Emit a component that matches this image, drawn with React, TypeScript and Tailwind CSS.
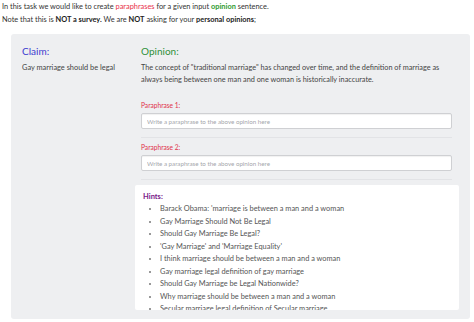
const hints = [
  "Barack Obama: 'marriage is between a man and a woman",
  'Gay Marriage Should Not Be Legal',
  'Should Gay Marriage Be Legal?',
  "'Gay Marriage' and 'Marriage Equality'",
  'I think marriage should be between a man and a woman',
  'Gay marriage legal definition of gay marriage',
  'Should Gay Marriage be Legal Nationwide?',
  'Why marriage should be between a man and a woman',
  'Secular marriage legal definition of Secular marriage',
  'Same-sex marriage in the United States',
]

function ParaphraseField({ n }: { n: number }) {
  return (
    <div className="mr-[7px]">
      <p className="text-[6.6px] leading-[9px] text-[#e0304a]">Paraphrase {n}:</p>
      <input
        className="mt-[3px] block h-[16px] w-full rounded-[2px] border border-[#cfd0d3] bg-white px-[5px] text-[6.2px] text-[#555] shadow-[inset_0_1px_1px_rgba(0,0,0,0.06)] outline-none placeholder:text-[#a4a6ab]"
        placeholder="Write a paraphrase to the above opinion here"
      />
      <div className="mt-[8px] h-px bg-[#e2e3e6]" />
    </div>
  )
}

export default function App() {
  return (
    <div className="h-[322px] w-[474px] overflow-hidden bg-white font-['Lato',sans-serif] text-[#333]">
      <div className="pl-[2px] text-[7.4px] leading-[13px]">
        <p>
          In this task we would like to create <span className="text-[#e8304a]">paraphrases</span> for a given input{' '}
          <span className="font-bold text-[#2e9a2e]">opinion</span> sentence.
        </p>
        <p>
          Note that this is <b className="text-[#222]">NOT a survey.</b> We are <b className="text-[#222]">NOT</b> asking for your{' '}
          <b className="text-[#222]">personal opinions</b>;
        </p>
      </div>

      <div className="ml-[11px] mt-[8px] flex h-[285px] w-[459px] rounded-[3px] bg-[#eeeff1] pl-[11px] pr-[11px] pt-[10px]">
        <div className="w-[119px] shrink-0">
          <h2 className="text-[10px] leading-[14px] text-[#3b3bcf]">Claim:</h2>
          <p className="mt-[4px] text-[7.4px] leading-[12px] text-[#444]">Gay marriage should be legal</p>
        </div>

        <div className="flex min-w-0 flex-1 flex-col">
          <h2 className="text-[10px] leading-[14px] text-[#2f8f3a]">Opinion:</h2>
          <p className="mt-[4px] text-[7.3px] leading-[12px] text-[#444]">
            The concept of "traditional marriage" has changed over time, and the definition of marriage as always
            being between one man and one woman is historically inaccurate.
          </p>

          <div className="mt-[15px] flex flex-col gap-[5px]">
            <ParaphraseField n={1} />
            <ParaphraseField n={2} />
          </div>

          <div className="-ml-[6px] mt-[5px] h-[125px] overflow-hidden rounded-[2px] bg-white pl-[8px] pt-[7px]">
            <p className="text-[7.5px] font-bold leading-[10px] text-[#7a1a8a]">Hints:</p>
            <ul className="mt-[1px] list-disc pl-[17px] text-[7.4px] leading-[12.5px] text-[#555] marker:text-[#777]">
              {hints.map((h) => (
                <li key={h}>{h}</li>
              ))}
            </ul>
          </div>
        </div>
      </div>
    </div>
  )
}
